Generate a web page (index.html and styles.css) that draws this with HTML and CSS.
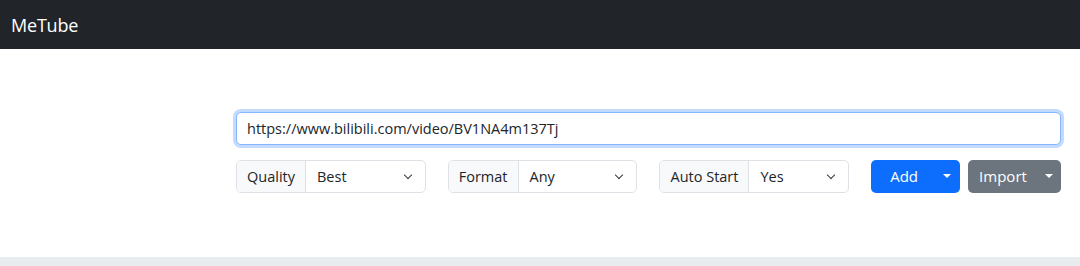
FILE: index.html
```html
<!DOCTYPE html>
<html>
	<head>
		<meta charset="UTF-8">
		<title>MeTube</title>
		<link rel="stylesheet" href="styles.css">
	</head>
	<body>
		<nav class="navbar">
			<span class="brand">MeTube</span>
		</nav>

		<main class="container">
			<div class="url-box">
				<input type="text" class="url" value="https://www.bilibili.com/video/BV1NA4m137Tj" />
			</div>

			<div class="options">
				<div class="group">
					<span class="label">Quality</span>
					<div class="select"><span>Best</span><i class="chev"></i></div>
				</div>
				<div class="group">
					<span class="label">Format</span>
					<div class="select"><span>Any</span><i class="chev"></i></div>
				</div>
				<div class="group">
					<span class="label">Auto Start</span>
					<div class="select"><span>Yes</span><i class="chev"></i></div>
				</div>
				<div class="btn btn-add">
					<span class="btn-text">Add</span>
					<span class="caret"></span>
				</div>
				<div class="btn btn-import">
					<span class="btn-text">Import</span>
					<span class="caret"></span>
				</div>
			</div>
		</main>

		<footer class="footer"></footer>
	</body>
</html>
```

FILE: styles.css
```css
*{
	box-sizing: border-box;
}
body{
	margin: 0;
	font-family: "Open Sans", "Noto Sans", sans-serif;
	font-size: 14.5px;
	color: #212529;
	background: #fff;
	height: 266px;
	display: flex;
	flex-direction: column;
}
.navbar{
	height: 49px;
	background-color: #212529;
	display: flex;
	align-items: center;
	padding-left: 11px;
}
.brand{
	color: #fff;
	font-size: 18px;
	letter-spacing: -0.2px;
}
.container{
	flex: 1;
	padding: 63px 0 0 236px;
	width: 1061px;
}
.url-box{
	padding-bottom: 15px;
}
.url{
	display: block;
	width: 825px;
	height: 33px;
	padding: 0 10px;
	font-family: inherit;
	font-size: 14.5px;
	color: #212529;
	border: 1px solid #86b7fe;
	border-radius: 5px;
	box-shadow: 0 0 0 3px rgba(13, 110, 253, 0.25);
	outline: none;
}
.options{
	display: flex;
	gap: 22px;
	height: 33px;
}
.group{
	display: flex;
	width: 190px;
	border: 1px solid #dee2e6;
	border-radius: 5px;
	overflow: hidden;
}
.label{
	display: flex;
	align-items: center;
	padding: 0 10px;
	background-color: #f8f9fa;
	border-right: 1px solid #dee2e6;
	white-space: nowrap;
}
.select{
	flex: 1;
	display: flex;
	align-items: center;
	justify-content: space-between;
	padding: 0 14px 0 11px;
}
.chev{
	width: 6px;
	height: 6px;
	border-right: 1.5px solid #343a40;
	border-bottom: 1.5px solid #343a40;
	transform: rotate(45deg);
	margin-top: -4px;
}
.btn{
	display: flex;
	align-items: center;
	height: 33px;
	padding-bottom: 1px;
	border-radius: 5px;
	color: #fff;
	font-size: 15px;
}
.btn-add{
	width: 89px;
	background-color: #0d6efd;
	padding-left: 19px;
	padding-right: 9px;
	justify-content: space-between;
	margin-right: -14px;
}
.btn-import{
	width: 93px;
	background-color: #6c757d;
	padding-left: 11px;
	padding-right: 8px;
	justify-content: space-between;
}
.caret{
	width: 0;
	height: 0;
	border-left: 4px solid transparent;
	border-right: 4px solid transparent;
	border-top: 4px solid #fff;
}
.footer{
	height: 9px;
	background-color: #e9ecef;
}
```
